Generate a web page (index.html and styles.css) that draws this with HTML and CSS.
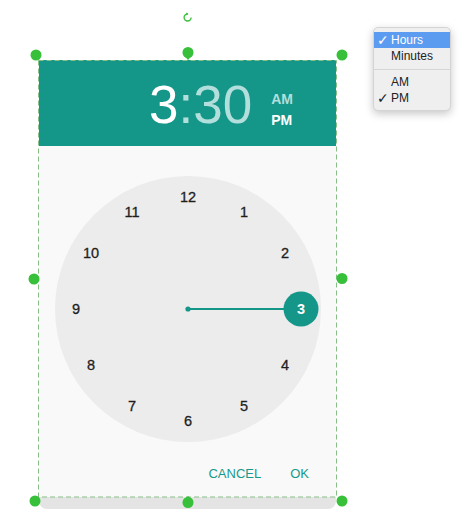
FILE: index.html
```html
<!DOCTYPE html>
<html>
<head>
<meta charset="utf-8">
<link rel="stylesheet" href="styles.css">
</head>
<body>
<div class="canvas">
  <div class="dialog">
    <div class="header">
      <div class="time"><span class="hr">3</span><span class="min">:30</span></div>
      <div class="ampm"><span class="am">AM</span><span class="pm">PM</span></div>
    </div>
    <div class="body">
      <svg class="clock" width="266" height="266" viewBox="0 0 266 266">
        <circle cx="133" cy="133" r="133" fill="#ececec"/>
        <g class="nums" text-anchor="middle">
          <text x="133" y="26.2">12</text>
          <text x="189" y="41.2">1</text>
          <text x="230" y="82.2">2</text>
          <text x="230" y="194.2">4</text>
          <text x="189" y="235.2">5</text>
          <text x="133" y="250.2">6</text>
          <text x="77" y="235.2">7</text>
          <text x="36" y="194.2">8</text>
          <text x="21" y="138.2">9</text>
          <text x="36" y="82.2">10</text>
          <text x="77" y="41.2">11</text>
        </g>
        <line x1="133" y1="133" x2="230" y2="133" stroke="#149689" stroke-width="1.8"/>
        <circle cx="133" cy="133" r="2.6" fill="#149689"/>
        <circle cx="246" cy="133" r="17.5" fill="#149689"/>
        <text class="sel" x="246" y="138.2" text-anchor="middle">3</text>
      </svg>
      <div class="actions"><span class="btn">CANCEL</span><span class="btn">OK</span></div>
    </div>
    <div class="foot"></div>
  </div>

  <svg class="selection" width="474" height="522" viewBox="0 0 474 522">
    <rect x="38.5" y="60.5" width="298" height="436.5" fill="none" stroke="#86bf86" stroke-width="1" stroke-dasharray="5 3"/>
    <path d="M187.6 14 A3.5 3.5 0 1 0 191.1 17.5" fill="none" stroke="#3dbf3d" stroke-width="1.4"/>
    <path d="M186.3 12.6 L188.6 14 L186.4 15.5 Z" fill="#3dbf3d"/>
    <g fill="#38c03a">
      <circle cx="36" cy="55" r="5.5"/>
      <circle cx="188" cy="52.5" r="5.5"/>
      <path d="M184.5 56 L188 60 L191.5 56 Z"/>
      <circle cx="342" cy="55" r="5.5"/>
      <circle cx="34" cy="279" r="5.5"/>
      <circle cx="342" cy="278.5" r="5.5"/>
      <circle cx="35" cy="501" r="5.5"/>
      <circle cx="188" cy="502.5" r="5.5"/>
      <path d="M184.5 499 L188 496 L191.5 499 Z"/>
      <circle cx="342" cy="501" r="5.5"/>
    </g>
  </svg>

  <div class="menu">
    <div class="item active"><span class="check">✓</span>Hours</div>
    <div class="item">Minutes</div>
    <div class="sep"></div>
    <div class="item">AM</div>
    <div class="item"><span class="check">✓</span>PM</div>
  </div>
</div>
</body>
</html>
```
FILE: styles.css
```css
html, body {
  margin: 0;
  padding: 0;
  background: #ffffff;
}
body {
  width: 474px;
  height: 522px;
  overflow: hidden;
  font-family: "Liberation Sans", Arial, sans-serif;
}
.canvas {
  position: relative;
  width: 474px;
  height: 522px;
  box-sizing: border-box;
  padding-top: 60px;
  padding-left: 39px;
}
.dialog {
  width: 297px;
}
.header {
  height: 86px;
  background: #149689;
  display: flex;
  justify-content: flex-end;
  align-items: flex-start;
  gap: 19px;
  padding-right: 43px;
  box-sizing: border-box;
}
.time {
  margin-top: 18px;
  font-size: 53px;
  line-height: 53px;
}
.hr { color: #ffffff; }
.min { color: #b2dfdb; }
.ampm {
  margin-top: 29px;
  display: flex;
  flex-direction: column;
  font-size: 14px;
  font-weight: bold;
  line-height: 21px;
}
.am { color: #b2dfdb; }
.pm { color: #ffffff; }
.body {
  background: #f9f9f9;
  padding-top: 30px;
  padding-bottom: 15px;
}
.clock {
  display: block;
  margin: 0 auto;
}
.nums text {
  font-family: "Liberation Sans", Arial, sans-serif;
  font-size: 14.5px;
  fill: #1e1e1e;
  stroke: #1e1e1e;
  stroke-width: 0.3px;
}
.sel {
  font-family: "Liberation Sans", Arial, sans-serif;
  font-size: 14.5px;
  font-weight: bold;
  fill: #ffffff;
}
.actions {
  margin-top: 24px;
  display: flex;
  justify-content: flex-end;
  gap: 29px;
  padding-right: 27px;
  line-height: 16px;
}
.btn {
  font-size: 13px;
  color: #179a8c;
}
.foot {
  height: 12px;
  background: #e4e4e4;
  border-radius: 0 0 8px 8px;
}
.selection {
  position: absolute;
  left: 0;
  top: 0;
  pointer-events: none;
}
.menu {
  position: absolute;
  left: 373px;
  top: 27px;
  width: 78px;
  box-sizing: border-box;
  padding: 4px 0;
  background: #efefef;
  border: 1px solid #d4d4d4;
  border-radius: 5px;
  box-shadow: 0 3px 8px rgba(0, 0, 0, 0.22);
  font-size: 12px;
  color: #222222;
}
.item {
  position: relative;
  height: 16px;
  line-height: 16px;
  padding-left: 17px;
}
.item.active {
  background: #5b9cf1;
  color: #ffffff;
}
.check {
  position: absolute;
  left: 3px;
  top: 0;
  font-family: "DejaVu Sans", sans-serif;
  font-size: 14px;
  font-weight: bold;
}
.sep {
  height: 1px;
  background: #d6d6d6;
  margin: 5px 0 4px;
}
```
